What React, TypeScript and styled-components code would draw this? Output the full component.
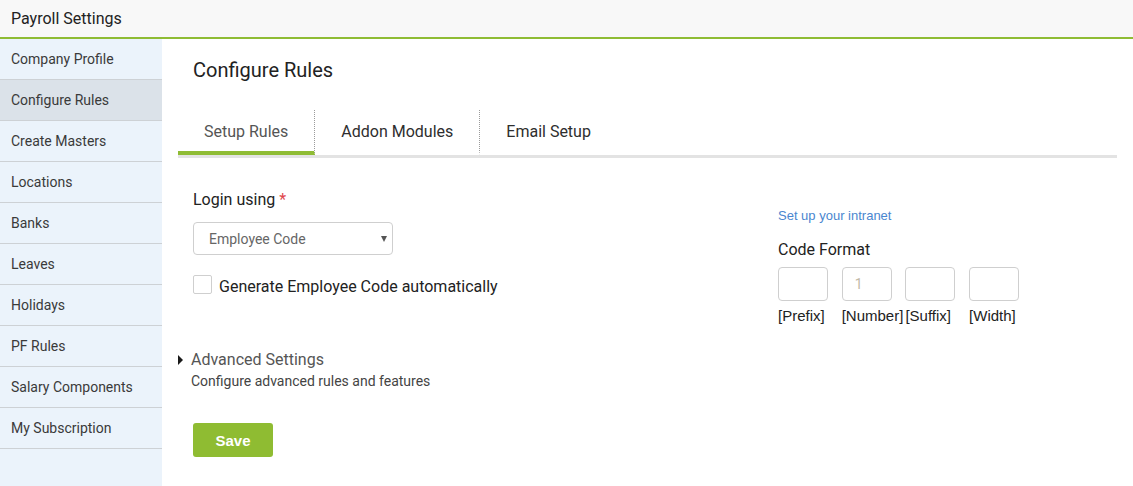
import styled, { createGlobalStyle } from "styled-components";

const GlobalStyle = createGlobalStyle`
  html, body {
    margin: 0;
    padding: 0;
    height: 100%;
    background: #ffffff;
    font-family: Roboto, "Liberation Sans", sans-serif;
  }
  #root {
    height: 100%;
  }
`;

const Page = styled.div`
  display: flex;
  flex-direction: column;
  height: 100vh;
`;

const TopBar = styled.div`
  height: 37px;
  flex: 0 0 37px;
  display: flex;
  align-items: center;
  padding-left: 11px;
  background-color: #f8f8f8;
  border-bottom: 2px solid #8fbc34;
  color: #222;
  font-size: 16px;
`;

const Body = styled.div`
  flex: 1;
  display: flex;
  min-height: 0;
`;

const Sidebar = styled.nav`
  width: 162px;
  flex: 0 0 162px;
  background-color: #ebf3fb;
  display: flex;
  flex-direction: column;
`;

const SideItem = styled.div<{ $active?: boolean }>`
  height: 40px;
  display: flex;
  align-items: center;
  padding-left: 11px;
  padding-bottom: 1px;
  box-sizing: border-box;
  height: 41px;
  font-size: 14px;
  color: #3a3a3a;
  border-bottom: 1px solid #cdd1d5;
  background-color: ${(p) => (p.$active ? "#dbe2e9" : "transparent")};
`;

const Main = styled.main`
  flex: 1;
  padding: 19px 16px 0;
  display: flex;
  flex-direction: column;
`;

const Title = styled.h1`
  margin: 0;
  padding-left: 15px;
  font-size: 20px;
  line-height: 24px;
  font-weight: 400;
  color: #222;
`;

const TabBar = styled.div`
  margin-top: 28px;
  display: flex;
  border-bottom: 3px solid #e3e3e3;
`;

const Tab = styled.div<{ $active?: boolean; $divider?: boolean }>`
  height: 40px;
  padding: 1px 26px 0;
  display: flex;
  align-items: center;
  font-size: 16px;
  color: ${(p) => (p.$active ? "#555" : "#2e2e2e")};
  border-bottom: 4px solid ${(p) => (p.$active ? "#8fbc34" : "transparent")};
  border-right: ${(p) => (p.$divider ? "1px dotted #9a9a9a" : "none")};
`;

const FormRow = styled.div`
  display: flex;
  padding-left: 15px;
`;

const LeftCol = styled.div`
  width: 585px;
  display: flex;
  flex-direction: column;
  padding-top: 32px;
`;

const RightCol = styled.div`
  display: flex;
  flex-direction: column;
  padding-top: 50px;
`;

const FieldLabel = styled.div`
  font-size: 16px;
  line-height: 20px;
  color: #222;
`;

const Required = styled.span`
  color: #e0474c;
`;

const SelectWrap = styled.div`
  position: relative;
  width: 200px;
  margin-top: 12px;

  &::after {
    content: "";
    position: absolute;
    right: 6px;
    top: 14px;
    border-left: 3px solid transparent;
    border-right: 3px solid transparent;
    border-top: 6px solid #555;
    pointer-events: none;
  }
`;

const Select = styled.select`
  appearance: none;
  width: 200px;
  height: 33px;
  padding: 0 0 0 15px;
  border: 1px solid #cfcfcf;
  border-radius: 4px;
  background: #fff;
  font-family: Roboto, "Liberation Sans", sans-serif;
  font-size: 14px;
  color: #666;
  outline: none;
`;

const CheckRow = styled.label`
  display: flex;
  align-items: flex-end;
  margin-top: 20px;
  font-size: 16px;
  color: #222;
  line-height: 20px;
`;

const CheckBox = styled.span`
  display: inline-block;
  width: 17px;
  height: 17px;
  border: 1px solid #cfcfcf;
  border-radius: 2px;
  margin-right: 7px;
  margin-bottom: 3px;
  background: #fff;
`;

const IntranetLink = styled.a`
  font-family: "Liberation Sans", Arial, sans-serif;
  font-size: 13px;
  line-height: 15px;
  color: #4a86cf;
  text-decoration: none;
`;

const CodeTitle = styled(FieldLabel)`
  margin-top: 17px;
`;

const CodeGrid = styled.div`
  display: grid;
  grid-template-columns: repeat(4, 50px);
  column-gap: 13.7px;
  row-gap: 6px;
  margin-top: 7px;
`;

const CodeBox = styled.input`
  box-sizing: border-box;
  width: 50px;
  height: 34px;
  border: 1px solid #cfcfcf;
  border-radius: 4px;
  padding: 0 0 0 12px;
  font-family: Roboto, "Liberation Sans", sans-serif;
  font-size: 14px;
  color: #333;
  outline: none;

  &::placeholder {
    color: #c2b9a6;
  }
`;

const CodeLabel = styled.span`
  font-family: "Liberation Sans", Arial, sans-serif;
  font-size: 15px;
  line-height: 17px;
  color: #222;
  white-space: nowrap;
`;

const Advanced = styled.div`
  margin-top: 26px;
  display: flex;
  align-items: center;
  font-size: 16px;
  line-height: 20px;
  color: #555;
`;

const Caret = styled.span`
  width: 0;
  height: 0;
  border-top: 5px solid transparent;
  border-bottom: 5px solid transparent;
  border-left: 5px solid #1a1a1a;
  margin-right: 8px;
`;

const AdvancedHint = styled.div`
  padding-left: 13px;
  margin-top: 2px;
  font-size: 14px;
  line-height: 18px;
  color: #444;
`;

const SaveButton = styled.button`
  margin: 33px 0 0 15px;
  width: 80px;
  height: 34px;
  border: none;
  border-radius: 3px;
  background-color: #8fbc32;
  color: #fff;
  font-family: "Liberation Sans", Arial, sans-serif;
  font-size: 15px;
  font-weight: 700;
  cursor: pointer;
`;

const menu = [
  "Company Profile",
  "Configure Rules",
  "Create Masters",
  "Locations",
  "Banks",
  "Leaves",
  "Holidays",
  "PF Rules",
  "Salary Components",
  "My Subscription",
];

const codeParts = [
  { label: "[Prefix]", placeholder: "" },
  { label: "[Number]", placeholder: "1" },
  { label: "[Suffix]", placeholder: "" },
  { label: "[Width]", placeholder: "" },
];

export default function App() {
  return (
    <Page>
      <GlobalStyle />
      <TopBar>Payroll Settings</TopBar>
      <Body>
        <Sidebar>
          {menu.map((item) => (
            <SideItem key={item} $active={item === "Configure Rules"}>
              {item}
            </SideItem>
          ))}
        </Sidebar>
        <Main>
          <Title>Configure Rules</Title>
          <TabBar>
            <Tab $active $divider>
              Setup Rules
            </Tab>
            <Tab $divider>Addon Modules</Tab>
            <Tab>Email Setup</Tab>
          </TabBar>
          <FormRow>
            <LeftCol>
              <FieldLabel>
                Login using <Required>*</Required>
              </FieldLabel>
              <SelectWrap>
                <Select defaultValue="code">
                  <option value="code">Employee Code</option>
                  <option value="email">Email</option>
                </Select>
              </SelectWrap>
              <CheckRow>
                <CheckBox />
                Generate Employee Code automatically
              </CheckRow>
            </LeftCol>
            <RightCol>
              <IntranetLink href="#">Set up your intranet</IntranetLink>
              <CodeTitle>Code Format</CodeTitle>
              <CodeGrid>
                {codeParts.map((p) => (
                  <CodeBox key={p.label} placeholder={p.placeholder} />
                ))}
                {codeParts.map((p) => (
                  <CodeLabel key={p.label + "l"}>{p.label}</CodeLabel>
                ))}
              </CodeGrid>
            </RightCol>
          </FormRow>
          <Advanced>
            <Caret />
            Advanced Settings
          </Advanced>
          <AdvancedHint>Configure advanced rules and features</AdvancedHint>
          <SaveButton>Save</SaveButton>
        </Main>
      </Body>
    </Page>
  );
}
